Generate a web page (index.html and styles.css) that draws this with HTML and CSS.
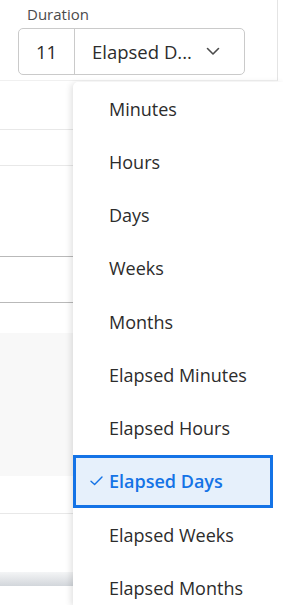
FILE: index.html
```html
<!DOCTYPE html>
<html lang="en">

<head>
    <meta charset="UTF-8">
    <meta name="viewport" content="width=device-width, initial-scale=1.0">
    <title>Duration</title>
    <link rel="stylesheet" href="styles.css">
</head>

<body>
    <div class="page">
        <header class="field-area">
            <span class="label">Duration</span>
            <div class="field">
                <div class="num">11</div>
                <div class="select">
                    <span>Elapsed D...</span>
                    <svg class="chev" width="14" height="9" viewBox="0 0 14 9">
                        <path d="M1.5 1.5 L7 7 L12.5 1.5" fill="none" stroke="#4b4b4b" stroke-width="1.6" stroke-linecap="round" stroke-linejoin="round"/>
                    </svg>
                </div>
            </div>
        </header>
        <div class="row r1"></div>
        <div class="row r2"></div>
        <div class="row r3"></div>
        <div class="row r4"></div>
        <div class="row r5"></div>
        <div class="gray-block"></div>
        <div class="row r6"></div>
        <div class="row r7"></div>
        <div class="shade"></div>
    </div>

    <ul class="menu">
        <li>Minutes</li>
        <li>Hours</li>
        <li>Days</li>
        <li>Weeks</li>
        <li>Months</li>
        <li>Elapsed Minutes</li>
        <li>Elapsed Hours</li>
        <li class="selected">
            <svg class="check" width="13" height="10" viewBox="0 0 13 10">
                <path d="M1 5.2 L4.6 8.6 L12 1" fill="none" stroke="#1473e6" stroke-width="1.4" stroke-linecap="round" stroke-linejoin="round"/>
            </svg>
            Elapsed Days
        </li>
        <li>Elapsed Weeks</li>
        <li>Elapsed Months</li>
    </ul>
</body>

</html>
```

FILE: styles.css
```css
* {
    box-sizing: border-box;
}

body {
    margin: 0;
    width: 283px;
    height: 605px;
    overflow: hidden;
    position: relative;
    background: #fff;
    font-family: "Open Sans", Lato, sans-serif;
    color: #2c2c2c;
}

.page {
    width: 283px;
}

.field-area {
    height: 81px;
    width: 278px;
    border-right: 1px solid #e4e4e4;
    border-bottom: 1px solid #f0f0f0;
    padding: 4px 0 0 18px;
}

.label {
    display: block;
    font-size: 15px;
    line-height: 20px;
    color: #4b4b4b;
    padding-left: 9px;
    height: 24px;
}

.field {
    display: flex;
    width: 227px;
    height: 47px;
    border: 1px solid #cacaca;
    border-radius: 5px;
}

.num {
    width: 56px;
    border-right: 1px solid #cacaca;
    display: flex;
    align-items: center;
    justify-content: center;
    font-size: 18.5px;
}

.select {
    flex: 1;
    display: flex;
    align-items: center;
    padding-left: 17px;
    font-size: 18.5px;
}

.chev {
    margin-left: 14px;
}

.row {
    border-bottom: 1px solid #e8e8e8;
}

.r1 { height: 49px; }
.r2 { height: 36px; }
.r3 { height: 91px; border-bottom-color: #b9b9b9; }
.r4 { height: 46px; border-bottom-color: #b9b9b9; }
.r5 { height: 30px; border-bottom: none; }

.gray-block {
    height: 143px;
    background: #f8f8f8;
}

.r6 { height: 38px; }
.r7 { height: 58px; border-bottom: none; }

.shade {
    height: 14px;
    background: linear-gradient(#f4f5f6, #d2d6db);
}

.menu {
    position: absolute;
    left: 73px;
    right: 0;
    top: 82px;
    bottom: 0;
    margin: 0;
    padding: 0;
    list-style: none;
    background: #fff;
    border-radius: 5px 0 0 0;
    box-shadow: -2px 1px 6px rgba(0, 0, 0, 0.12);
    overflow: hidden;
}

.menu li {
    height: 53.25px;
    display: flex;
    align-items: center;
    padding-left: 36px;
    font-size: 18px;
    color: #2c2c2c;
}

.menu li.selected {
    width: 200px;
    border: 3px solid #1473e6;
    background: #e6f0fb;
    color: #1473e6;
    font-weight: 600;
    padding-left: 14px;
}

.check {
    margin-right: 6px;
}
```
